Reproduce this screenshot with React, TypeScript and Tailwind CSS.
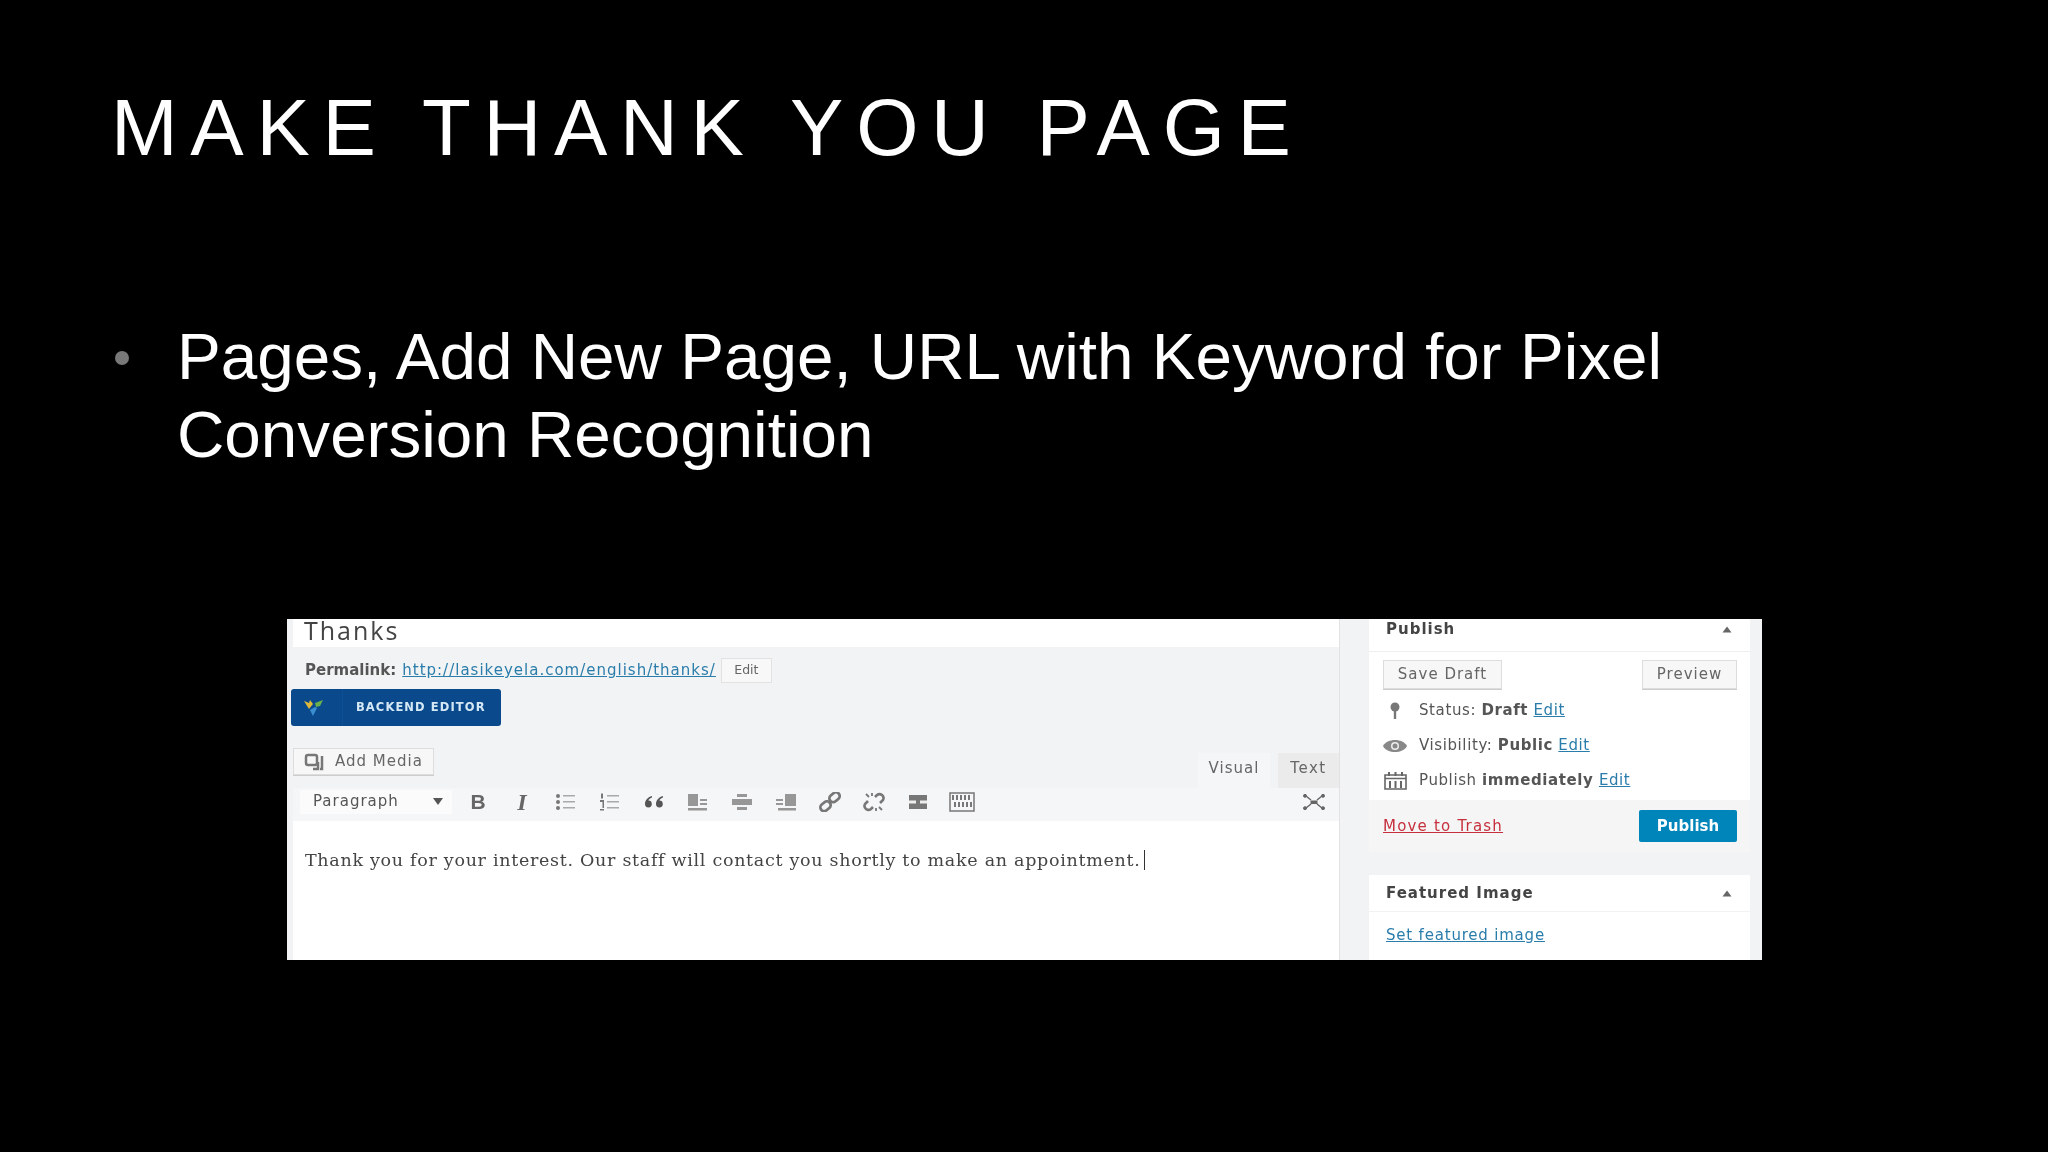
import React from 'react';

const ui = "font-['DejaVu_Sans',sans-serif]";

const Wrap: React.FC<{ children: React.ReactNode }> = ({ children }) => (
  <div className="flex h-full w-[44px] shrink-0 items-center justify-center text-[#777]">{children}</div>
);

const Icon: React.FC<{ w?: number; h?: number; box?: string; children: React.ReactNode }> = ({ w = 22, h = 20, box = '0 0 22 20', children }) => (
  <svg width={w} height={h} viewBox={box} fill="#777">{children}</svg>
);

const UpArrow = () => (
  <svg width="10" height="7" viewBox="0 0 10 7" fill="#666"><path d="M5 0.5 9.5 6.5H0.5Z" /></svg>
);

const toolbarIcons = [
  <span key="b" className="font-['Liberation_Sans',sans-serif] text-[21px] font-bold text-[#666]">B</span>,
  <span key="i" className="font-['Liberation_Serif',serif] text-[24px] font-bold italic text-[#666]">I</span>,
  <Icon key="ul"><circle cx="3" cy="4" r="2" /><circle cx="3" cy="10" r="2" /><circle cx="3" cy="16" r="2" /><path d="M8 3h12v1.500H8zM8 9h12v1.500H8zM8 15h12v1.500H8z" opacity=".6" /></Icon>,
  <Icon key="ol"><path d="M2 1.500h2v5H2zM1 8h4v8H3.500v-6H1zM1 17h4v1.500H1z" /><path d="M8 3h12v1.500H8zM8 9h12v1.500H8zM8 15h12v1.500H8z" opacity=".6" /></Icon>,
  <Icon key="q"><path d="M9 4C5 5 2 8 2 12a3.400 3.400 0 1 0 3.400-3.400C5.800 7 7.500 6 9 5.500zM20 4c-4 1-7 4-7 8a3.400 3.400 0 1 0 3.400-3.400C16.800 7 18.500 6 20 5.500z" fill="#555" /></Icon>,
  <Icon key="al"><path d="M1 2h10v12H1zM13 7h7v2h-7zM13 11h7v2h-7zM1 16h19v2.500H1z" opacity=".75" /></Icon>,
  <Icon key="ac"><path d="M6 2h10v3H6zM1 7h20v6H1zM6 15h10v3H6z" opacity=".75" /></Icon>,
  <Icon key="ar"><path d="M10 2h11v12H10zM1 7h7v2H1zM1 11h7v2H1zM3 16h18v2.500H3z" opacity=".75" /></Icon>,
  <Icon key="link"><g fill="none" stroke="#777" strokeWidth="2.800"><rect x="10" y="1.500" width="11" height="7.500" rx="3.700" transform="rotate(-40 15.500 5.200)" /><rect x="1" y="10.500" width="11" height="7.500" rx="3.700" transform="rotate(-40 6.500 14.200)" /></g></Icon>,
  <Icon key="unlink"><g fill="none" stroke="#777" strokeWidth="2.600"><path d="M12 5l2-2a4 4 0 0 1 6 5l-3 3" /><path d="M10 15l-2 2a4 4 0 0 1-6-5l3-3" /><path d="M3 2l3 3M16 15l3 3M9 1v3M13 16v3" strokeWidth="1.800" /></g></Icon>,
  <Icon key="more"><path d="M2 3h18v14H2z" /><path d="M2 8.500h7v3H2zM13 8.500h7v3h-7z" fill="#eee" /></Icon>,
  <Icon key="kb" w={26} h={20} box="0 0 26 20"><path d="M1 1h24v18H1z" fill="none" stroke="#777" strokeWidth="1.500" /><path d="M3 3h2v5H3zM7 3h2v5H7zM11 3h2v5h-2zM15 3h2v5h-2zM19 3h2v5h-2zM5 10h2v5H5zM9 10h2v5H9zM13 10h2v5h-2zM17 10h2v5h-2zM21 10h2v5h-2z" /></Icon>,
];

const Screenshot = () => (
  <div className={`ml-[287px] mt-[145px] flex h-[341px] w-[1475px] overflow-hidden bg-[#f2f3f4] blur-[0.7px] ${ui}`}>
    <div className="flex w-[1053px] shrink-0 flex-col border-r border-[#e2e2e2]">
      <div className="ml-[6px] h-[28px] shrink-0 bg-white pl-[11px] text-[25px] leading-[22px] text-[#444] font-['Open_Sans',sans-serif]">
        <span className="tracking-[2px]">Thanks</span>
      </div>

      <div className="mt-[11px] flex h-[25px] shrink-0 items-center pl-[18px] text-[15px]">
        <span className="font-bold text-[#555]">Permalink:</span>
        <a className="ml-[6px] tracking-[1px] text-[#2a7dab] underline">http://lasikeyela.com/english/thanks/</a>
        <span className="ml-[5px] flex h-[25px] w-[51px] items-center justify-center border border-[#e2e2e2] bg-[#f8f8f8] text-[12.500px] text-[#666]">Edit</span>
      </div>

      <div className="ml-[4px] mt-[6px] flex h-[37px] w-[210px] shrink-0 items-center rounded-[3px] bg-[#0a4a8c]">
        <svg className="ml-[12px]" width="22" height="20" viewBox="0 0 22 20">
          <path d="M1 3l5 2 1-3 3 4-4 5z" fill="#e0b93a" />
          <path d="M12 5l8-3-3 6-4 1z" fill="#6ab04c" />
          <path d="M7 12l5-3 2 1-4 8z" fill="#3b8fd0" />
        </svg>
        <div className="ml-[17px] h-[37px] w-px bg-[#0d4f94]" />
        <span className="ml-[13px] text-[11.500px] font-bold tracking-[1.100px] text-[#d5e8f5]">BACKEND EDITOR</span>
      </div>

      <div className="mt-[22px] flex h-[40px] shrink-0 items-start justify-between text-[15px] tracking-[1px]">
        <div className="ml-[6px] flex h-[27px] w-[141px] items-center border border-[#ddd] bg-[#f7f7f7] pl-[10px] text-[#666] shadow-[0_1px_0_#ccc]">
          <svg width="22" height="20" viewBox="0 0 22 20" fill="none" stroke="#777" strokeWidth="2.500">
            <rect x="2" y="3" width="11" height="10" rx="2" />
            <path d="M9 17h5v-7M18 4v13h-2" />
          </svg>
          <span className="ml-[9px]">Add Media</span>
        </div>
        <div className="mt-[5px] flex h-[35px] items-stretch text-[#666]">
          <div className="flex w-[72px] items-center justify-center bg-[#f5f6f7] pb-[4px]">Visual</div>
          <div className="ml-[8px] flex w-[61px] items-center justify-center bg-[#ebebeb] pb-[4px] tracking-[1.500px]">Text</div>
        </div>
      </div>

      <div className="ml-[6px] flex h-[33px] shrink-0 items-center bg-[#f5f6f7] pb-[6px]">
        <div className="ml-[7px] flex h-[24px] w-[152px] shrink-0 items-center justify-between bg-[#fbfbfb] px-[13px] pr-[9px] text-[15px] tracking-[1px] text-[#555]">
          <span>Paragraph</span>
          <svg width="10" height="7" viewBox="0 0 10 7" fill="#555"><path d="M0 0h10L5 7Z" /></svg>
        </div>
        <div className="ml-[4px] flex h-full items-center">
          {toolbarIcons.map((icon, i) => <Wrap key={i}>{icon}</Wrap>)}
        </div>
        <svg className="ml-auto mr-[14px]" width="22" height="16" viewBox="0 0 22 16" stroke="#666" fill="#666">
          <path d="M3 2l5 4M19 2l-5 4M3 14l5-4M19 14l-5-4" strokeWidth="1.500" />
          <rect x="8" y="7" width="6" height="2.500" />
          <circle cx="2" cy="1.800" r="1.500" /><circle cx="20" cy="1.800" r="1.500" /><circle cx="2" cy="14.200" r="1.500" /><circle cx="20" cy="14.200" r="1.500" />
        </svg>
      </div>

      <div className="ml-[6px] flex-1 bg-white pl-[12px] pt-[28px] font-['DejaVu_Serif',serif] text-[17.500px] leading-[22px] tracking-[0.700px] text-[#444]">
        <span className="border-r border-[#333] pr-[3px]">Thank you for your interest. Our staff will contact you shortly to make an appointment.</span>
      </div>
    </div>

    <div className="ml-[29px] flex w-[381px] shrink-0 flex-col text-[15px] text-[#555]">
      <div className="h-[181px] shrink-0 bg-white">
        <div className="flex h-[33px] items-center justify-between border-b border-[#eee] px-[18px] pb-[11px] pl-[17px] font-bold text-[#444]">
          <span className="tracking-[1px]">Publish</span>
          <UpArrow />
        </div>
        <div className="mt-[8px] flex justify-between px-[14px] pr-[13px] tracking-[1px]">
          <span className="flex h-[29px] w-[119px] items-center justify-center border border-[#ddd] bg-[#f7f7f7] text-[#666] shadow-[0_1px_0_#ccc]">Save Draft</span>
          <span className="flex h-[29px] w-[95px] items-center justify-center border border-[#ddd] bg-[#f7f7f7] text-[#666] shadow-[0_1px_0_#ccc]">Preview</span>
        </div>
        <div className="mt-[4px] flex h-[35px] items-center tracking-[0.600px]">
          <div className="flex w-[50px] justify-center pl-[2px]">
            <svg width="14" height="18" viewBox="0 0 14 18" fill="#777"><circle cx="7" cy="5" r="4.500" /><path d="M5.800 8h2.400v9H5.800z" /></svg>
          </div>
          <span>Status: <b className="text-[#555]">Draft</b> <a className="text-[#2a7dab] underline">Edit</a></span>
        </div>
        <div className="flex h-[35px] items-center tracking-[0.600px]">
          <div className="flex w-[50px] justify-center pl-[2px]">
            <svg width="24" height="14" viewBox="0 0 24 14" fill="#888"><path d="M0 7c4-8 20-8 24 0-4 8-20 8-24 0z" /><circle cx="12" cy="7" r="4" fill="#eee" /><circle cx="12" cy="7" r="2.500" /></svg>
          </div>
          <span>Visibility: <b className="text-[#555]">Public</b> <a className="text-[#2a7dab] underline">Edit</a></span>
        </div>
        <div className="flex h-[35px] items-center tracking-[0.600px]">
          <div className="flex w-[50px] justify-center pl-[2px]">
            <svg width="23" height="19" viewBox="0 0 23 19" fill="none" stroke="#666" strokeWidth="1.600"><path d="M1 4h21v14H1zM1 7.500h21" /><path d="M5 1v4M11.500 1v4M18 1v4M6 10v7M11.500 10v7M17 10v7" strokeWidth="2" /></svg>
          </div>
          <span>Publish <b className="text-[#555]">immediately</b> <a className="text-[#2a7dab] underline">Edit</a></span>
        </div>
      </div>
      <div className="flex h-[52px] shrink-0 items-center justify-between bg-[#f5f5f5] pl-[14px] pr-[13px]">
        <a className="tracking-[1.200px] text-[#c6303e] underline">Move to Trash</a>
        <span className="flex h-[32px] w-[98px] items-center justify-center rounded-[2px] bg-[#0085ba] font-bold text-white">Publish</span>
      </div>
      <div className="mt-[23px] flex-1 bg-white">
        <div className="flex h-[37px] items-center justify-between border-b border-[#f2f2f2] px-[18px] pl-[17px] font-bold text-[#444]">
          <span className="tracking-[1px]">Featured Image</span>
          <UpArrow />
        </div>
        <a className="ml-[17px] mt-[12px] block tracking-[0.800px] text-[#2a7dab] underline">Set featured image</a>
      </div>
    </div>
  </div>
);

export default function App() {
  return (
    <div className="h-[1152px] w-[2048px] overflow-hidden bg-black font-['Liberation_Sans',sans-serif]">
      <h1 className="pl-[111px] pt-[82px] text-[80px] leading-[92px] tracking-[12.700px] text-white">MAKE THANK YOU PAGE</h1>
      <div className="mt-[144px] flex">
        <div className="ml-[115px] mt-[33px] h-[14px] w-[14px] shrink-0 rounded-full bg-[#787878]" />
        <p className="ml-[48px] text-[65.600px] leading-[78px] text-white">
          Pages, Add New Page, URL with Keyword for Pixel<br />Conversion Recognition
        </p>
      </div>
      <Screenshot />
    </div>
  );
}
